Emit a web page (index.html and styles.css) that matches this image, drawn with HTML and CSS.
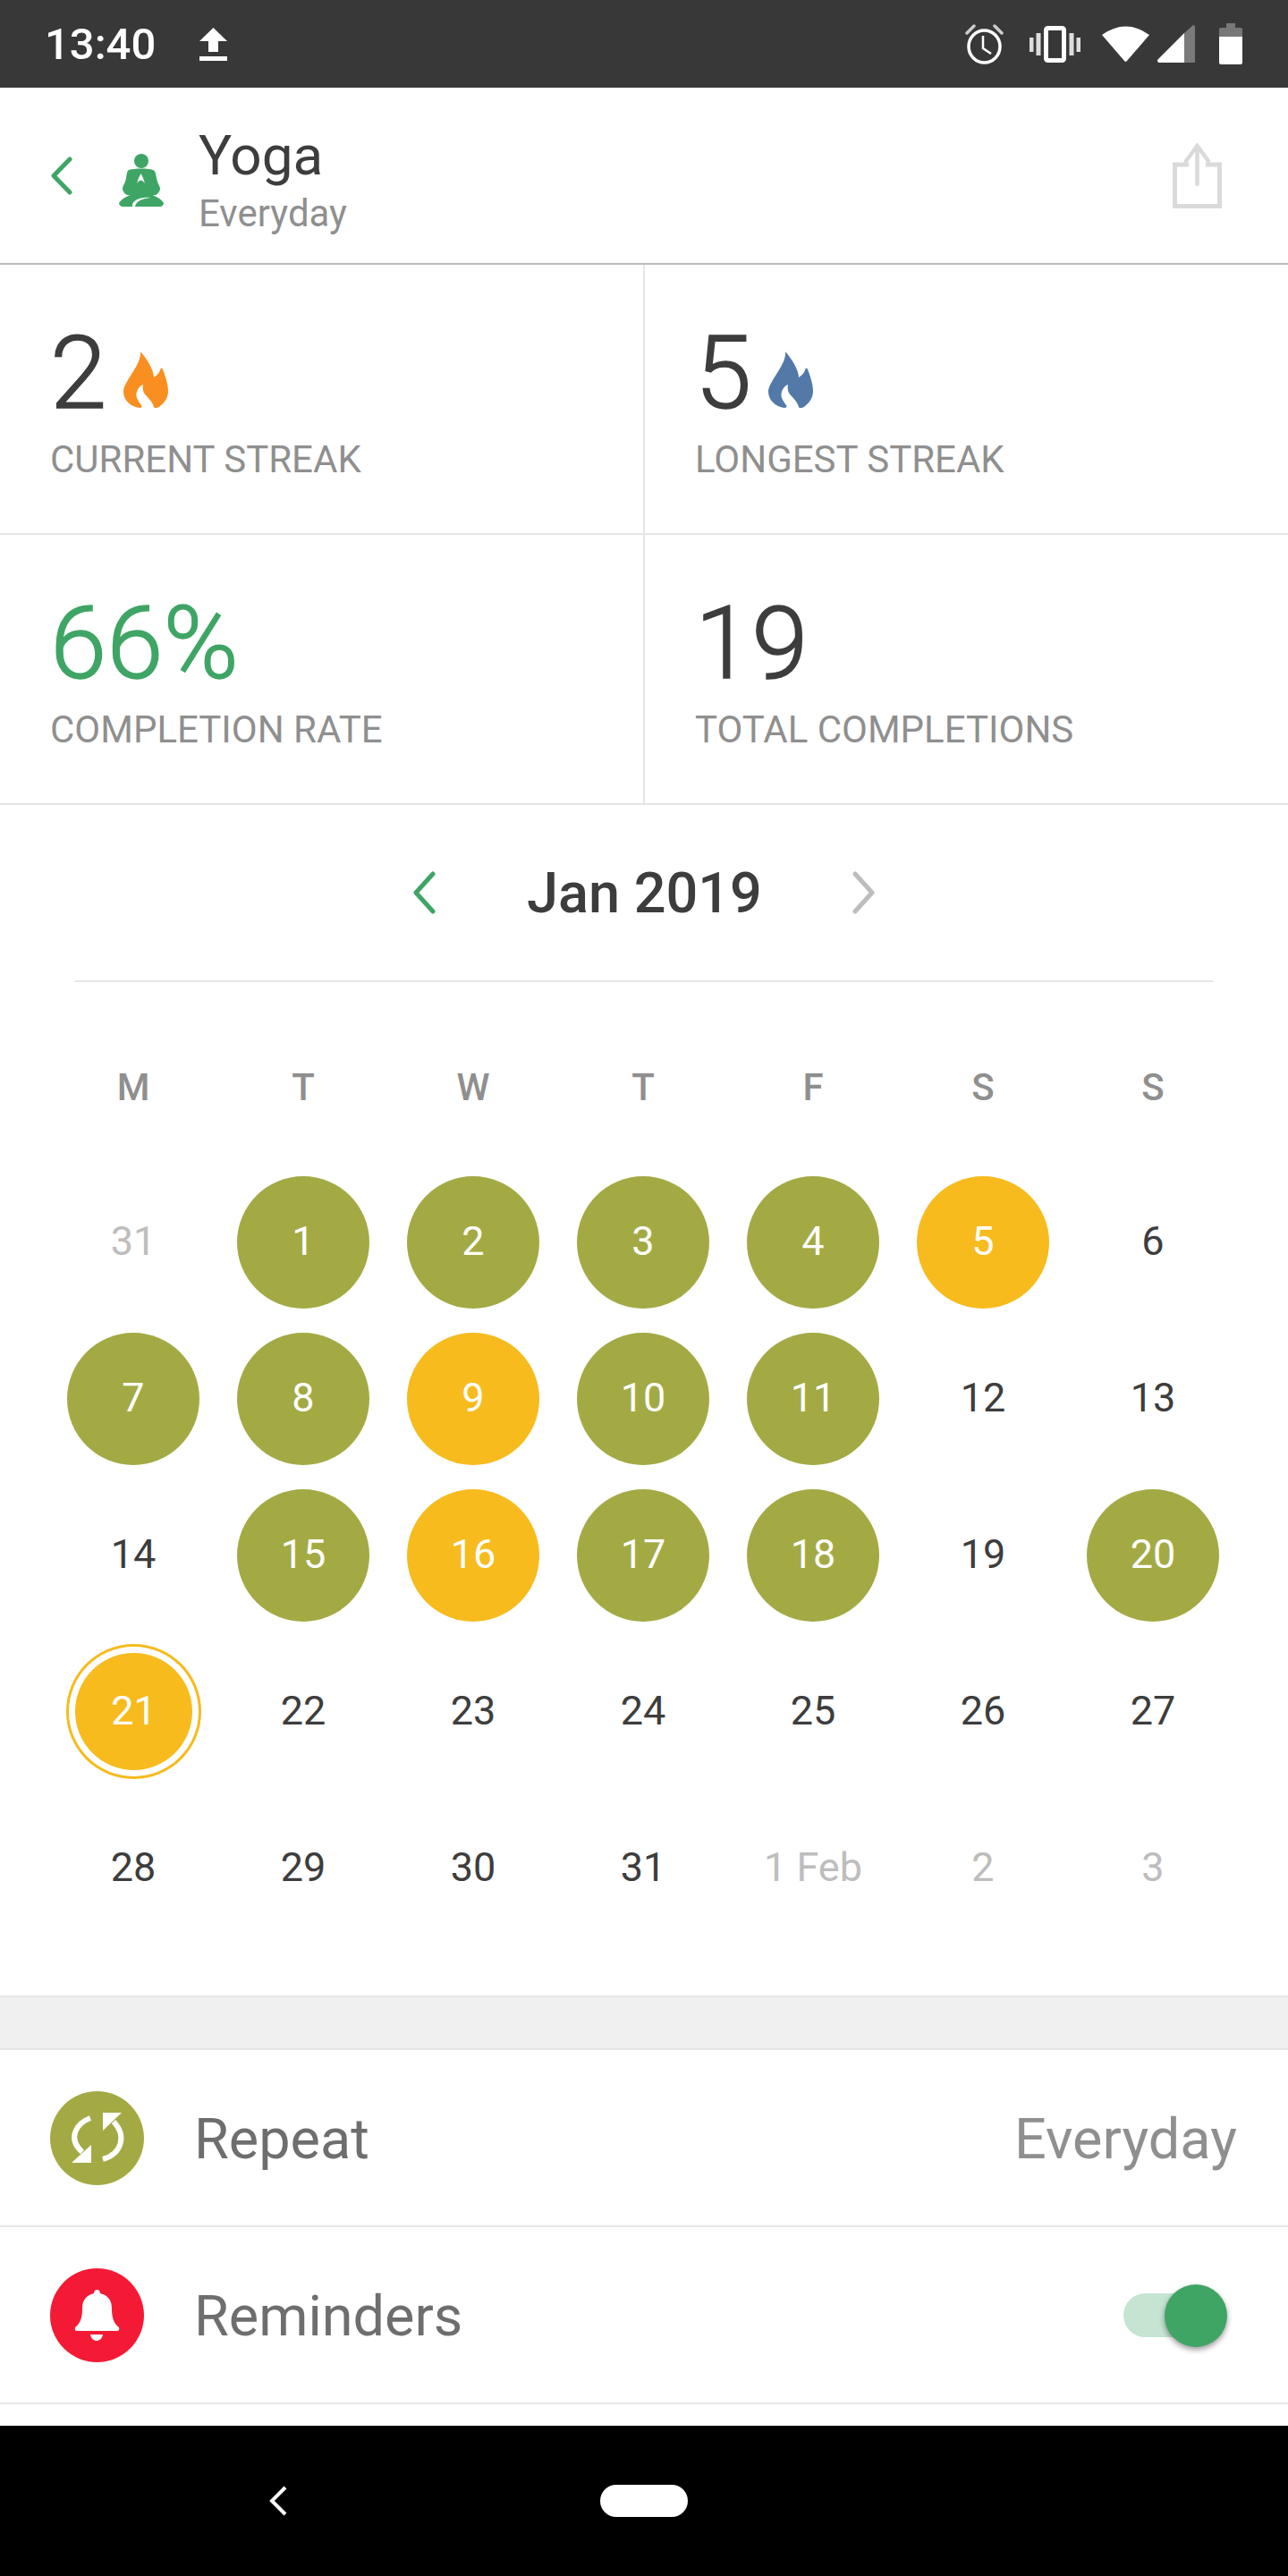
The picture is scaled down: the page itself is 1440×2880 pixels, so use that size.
FILE: index.html
```html
<!DOCTYPE html>
<html lang="en">
<head>
    <meta charset="UTF-8">
    <meta name="viewport" content="width=device-width, initial-scale=1.0">
    <title>Yoga</title>
    <link rel="stylesheet" href="styles.css">
</head>
<body>
<div class="screen">
    <!-- status bar -->
    <div class="status-bar">
        <span class="clock">13:40</span>
        <svg class="upload-icon" width="31" height="37" viewBox="0 0 31 37">
            <path d="M15.500 0 L31 15 H21 V27 H10 V15 H0 Z M0 32 H31 V37 H0 Z" fill="#fff"/>
        </svg>
        <div class="status-icons">
            <svg width="43" height="45" viewBox="0 0 43 45">
                <ellipse cx="21.500" cy="25" rx="17.500" ry="18" fill="none" stroke="#fff" stroke-width="3.500"/>
                <path d="M20 13 V27 L29 33" fill="none" stroke="#fff" stroke-width="2.500"/>
                <path d="M2 10 L10 2 M41 10 L33 2" stroke="#ccc" stroke-width="3.500" stroke-linecap="round"/>
            </svg>
            <svg class="icon-vibrate" width="57" height="41" viewBox="0 0 57 41">
                <rect x="18.500" y="2.500" width="20" height="36" rx="2" fill="none" stroke="#fff" stroke-width="5"/>
                <path d="M2 13 V29 M10 8 V33 M47 8 V33 M55 13 V29" stroke="#ddd" stroke-width="5"/>
            </svg>
            <svg class="icon-wifi" width="53" height="42" viewBox="0 0 53 42">
                <path d="M0 11 Q26.500 -8 53 11 L28 40 Q26.500 42 25 40 Z" fill="#fff"/>
            </svg>
            <svg class="icon-signal" width="42" height="42" viewBox="0 0 42 42">
                <path d="M30 9 L40 0 Q42 0 42 2 V42 H30 Z" fill="#7a7a7a"/>
                <path d="M30 9 V42 H2 Q0 42 0 39 Z" fill="#fff"/>
            </svg>
            <svg class="icon-battery" width="26" height="46" viewBox="0 0 26 46">
                <path d="M8 0 H18 V5 H24 Q26 5 26 7 V15 H0 V7 Q0 5 2 5 H8 Z" fill="#777"/>
                <path d="M0 15 H26 V44 Q26 46 24 46 H2 Q0 46 0 44 Z" fill="#fff"/>
            </svg>
        </div>
    </div>

    <!-- title row -->
    <div class="top-bar">
        <svg class="back-icon" width="25" height="43" viewBox="0 0 25 43">
            <path d="M22 3 L4 21.500 L22 40" fill="none" stroke="#3fa565" stroke-width="5" stroke-linecap="round" stroke-linejoin="round"/>
        </svg>
        <svg class="habit-icon" width="50" height="59" viewBox="0 0 50 59">
            <circle cx="25" cy="8" r="8" fill="#3fa565"/>
            <path d="M11 18 C17 16 33 16 38 18 C41 19 41 22 42 27 C43 33 46 36 46 39 C46 42 43 45 41 46 H9 C7 45 4 42 4 39 C4 36 7 33 8 27 C9 22 9 19 11 18 Z" fill="#3fa565"/>
            <path d="M0 55 C3 50 10 47 17 44 H33 C40 47 47 50 50 55 C50 57 48 59 46 59 H4 C2 59 0 57 0 55 Z" fill="#3fa565"/>
            <path d="M20 33 Q22 26 24.500 22 Q27 26 29 33 Q24.500 26 20 33 Z" fill="#fff"/>
            <path d="M15 59 C14 52 24 48 35 49 C28 50 19 52 18 59 Z" fill="#fff"/>
        </svg>
        <div class="title-block">
            <h1 class="habit-name">Yoga</h1>
            <p class="habit-freq">Everyday</p>
        </div>
        <svg class="share-icon" width="55" height="73" viewBox="0 0 55 73">
            <path d="M18 24 H2.500 V70.500 H52.500 V24 H37" fill="none" stroke="#dadada" stroke-width="5"/>
            <path d="M27.500 46 V3 M15 20 L27.500 3 L40 20" fill="none" stroke="#dadada" stroke-width="4.500" stroke-linecap="round"/>
        </svg>
    </div>

    <!-- streak numbers -->
    <div class="stats">
        <div class="stat">
            <div class="stat-value">2
                <svg class="flame" width="50" height="63" viewBox="0 0 50 63"><path d="M19 0 C20 8 14 18 8 27 C3 35 0 40 0 45 C0 54 8 62 18 63 C21 63 21 61 20 60 C16 55 13 50 15 45 C16 41 19 38 22 37 C21 42 22 46 26 50 C30 54 33 58 34 62 C35 64 38 63 40 62 C46 57 50 52 50 44 C50 36 46 25 44 20 C43 18 42 18 41 21 C40 24 37 27 34 29 C34 24 31 14 19 0 Z" fill="#f98f20"/></svg>
            </div>
            <div class="stat-label">CURRENT STREAK</div>
        </div>
        <div class="stat">
            <div class="stat-value">5
                <svg class="flame" width="50" height="63" viewBox="0 0 50 63"><path d="M19 0 C20 8 14 18 8 27 C3 35 0 40 0 45 C0 54 8 62 18 63 C21 63 21 61 20 60 C16 55 13 50 15 45 C16 41 19 38 22 37 C21 42 22 46 26 50 C30 54 33 58 34 62 C35 64 38 63 40 62 C46 57 50 52 50 44 C50 36 46 25 44 20 C43 18 42 18 41 21 C40 24 37 27 34 29 C34 24 31 14 19 0 Z" fill="#5379a8"/></svg>
            </div>
            <div class="stat-label">LONGEST STREAK</div>
        </div>
        <div class="stat">
            <div class="stat-value green">66%</div>
            <div class="stat-label">COMPLETION RATE</div>
        </div>
        <div class="stat">
            <div class="stat-value">19</div>
            <div class="stat-label">TOTAL COMPLETIONS</div>
        </div>
    </div>

    <!-- month calendar -->
    <div class="calendar">
        <div class="month-nav">
            <svg width="28" height="48" viewBox="0 0 28 48"><path d="M24 3 L5 24 L24 45" fill="none" stroke="#3fa565" stroke-width="5" stroke-linecap="round" stroke-linejoin="round"/></svg>
            <span class="month-name">Jan 2019</span>
            <svg width="28" height="48" viewBox="0 0 28 48"><path d="M4 3 L23 24 L4 45" fill="none" stroke="#bdbdbd" stroke-width="5" stroke-linecap="round" stroke-linejoin="round"/></svg>
        </div>
        <div class="month-rule"></div>
        <div class="weekdays">
            <span>M</span><span>T</span><span>W</span><span>T</span><span>F</span><span>S</span><span>S</span>
        </div>
        <div class="days">
            <div class="day"><span class="num muted">31</span></div>
            <div class="day"><span class="num done">1</span></div>
            <div class="day"><span class="num done">2</span></div>
            <div class="day"><span class="num done">3</span></div>
            <div class="day"><span class="num done">4</span></div>
            <div class="day"><span class="num best">5</span></div>
            <div class="day"><span class="num">6</span></div>

            <div class="day"><span class="num done">7</span></div>
            <div class="day"><span class="num done">8</span></div>
            <div class="day"><span class="num best">9</span></div>
            <div class="day"><span class="num done">10</span></div>
            <div class="day"><span class="num done">11</span></div>
            <div class="day"><span class="num">12</span></div>
            <div class="day"><span class="num">13</span></div>

            <div class="day"><span class="num">14</span></div>
            <div class="day"><span class="num done">15</span></div>
            <div class="day"><span class="num best">16</span></div>
            <div class="day"><span class="num done">17</span></div>
            <div class="day"><span class="num done">18</span></div>
            <div class="day"><span class="num">19</span></div>
            <div class="day"><span class="num done">20</span></div>

            <div class="day"><span class="num best today">21</span></div>
            <div class="day"><span class="num">22</span></div>
            <div class="day"><span class="num">23</span></div>
            <div class="day"><span class="num">24</span></div>
            <div class="day"><span class="num">25</span></div>
            <div class="day"><span class="num">26</span></div>
            <div class="day"><span class="num">27</span></div>

            <div class="day"><span class="num">28</span></div>
            <div class="day"><span class="num">29</span></div>
            <div class="day"><span class="num">30</span></div>
            <div class="day"><span class="num">31</span></div>
            <div class="day"><span class="num muted">1 Feb</span></div>
            <div class="day"><span class="num muted">2</span></div>
            <div class="day"><span class="num muted">3</span></div>
        </div>
    </div>

    <div class="band"></div>

    <!-- settings rows -->
    <div class="setting">
        <svg class="setting-icon" width="105" height="105" viewBox="0 0 105 105">
            <circle cx="52.500" cy="52.500" r="52.500" fill="#a3aa44"/>
            <path d="M45 30 C29 36 19 53 36 68" fill="none" stroke="#fff" stroke-width="6"/>
            <path d="M46 60 V80 H24 Z" fill="#fff"/>
            <path d="M59 24 H80 L59 44 Z" fill="#fff"/>
            <path d="M71 34 C86 50 80 70 59 76" fill="none" stroke="#fff" stroke-width="6"/>
        </svg>
        <span class="setting-label">Repeat</span>
        <span class="setting-value">Everyday</span>
    </div>
    <div class="setting">
        <svg class="setting-icon" width="105" height="105" viewBox="0 0 105 105">
            <circle cx="52.500" cy="52.500" r="52.500" fill="#f41a35"/>
            <path d="M52.500 24 C55 24 56 26 56 28 C65 30 69 36 69 45 C69 57 72 62 77 66 Q78 70 75 70 H30 Q27 70 28 66 C33 62 36 57 36 45 C36 36 40 30 49 28 C49 26 50 24 52.500 24 Z" fill="#fff"/>
            <path d="M45 74 H59 C58 79 55 81 52 81 C49 81 46 79 45 74 Z" fill="#fff"/>
        </svg>
        <span class="setting-label">Reminders</span>
        <div class="switch"><div class="switch-knob"></div></div>
    </div>
    <div class="page-rest"></div>

    <!-- navigation bar -->
    <div class="nav-bar">
        <svg class="nav-back" width="20" height="34" viewBox="0 0 20 34">
            <path d="M18 2 L3 17 L18 32" fill="none" stroke="#fff" stroke-width="4"/>
        </svg>
        <div class="nav-home"></div>
    </div>
</div>
</body>
</html>
```

FILE: styles.css
```css
* {
    box-sizing: border-box;
}
body {
    margin: 0;
    font-family: Roboto, "Noto Sans", sans-serif;
    background: white;
    color: #3d3d3d;
}
.screen {
    width: 1440px;
    height: 2880px;
    display: flex;
    flex-direction: column;
    overflow: hidden;
}

/* status bar */
.status-bar {
    height: 98px;
    flex: none;
    background: #383838;
    display: flex;
    align-items: center;
    padding: 0 51px 0 50px;
}
.clock {
    color: white;
    font-size: 49px;
    font-weight: 500;
    line-height: 98px;
    padding-top: 2px;
}
.upload-icon {
    margin: 0 0 0 49px;
}
.status-icons {
    margin-left: auto;
    display: flex;
    align-items: center;
}
.icon-vibrate {
    margin-left: 29px;
}
.icon-wifi {
    margin-left: 24px;
}
.icon-signal {
    margin-left: 9px;
}
.icon-battery {
    margin-left: 27px;
}

/* title row */
.top-bar {
    height: 198px;
    flex: none;
    border-bottom: 2px solid #bbbbbb;
    display: flex;
    align-items: center;
    padding: 0 74px 0 56px;
}
.habit-icon {
    margin-left: 52px;
    margin-top: 10px;
}
.title-block {
    margin-left: 39px;
    padding-top: 8px;
}
.habit-name {
    margin: 0;
    font-size: 62px;
    font-weight: 400;
    line-height: 74px;
}
.habit-freq {
    margin: 3px 0 0;
    font-size: 42px;
    line-height: 50px;
    color: #8f8f8f;
}
.share-icon {
    margin-left: auto;
}

/* streak numbers */
.stats {
    display: grid;
    grid-template-columns: 719px 721px;
    flex: none;
}
.stat {
    height: 302px;
    padding: 64px 0 0 56px;
    border-bottom: 2px solid #e6e6e6;
}
.stat:nth-child(even) {
    border-left: 2px solid #e6e6e6;
}
.stat-value {
    font-size: 114px;
    font-weight: 300;
    -webkit-text-stroke: 1.5px currentColor;
    line-height: 114px;
    height: 114px;
    display: flex;
    align-items: baseline;
}
.stat-value.green {
    color: #3fa565;
}
.flame {
    margin: 0 0 2px 19px;
}
.stat-label {
    margin-top: 15px;
    font-size: 42px;
    font-weight: 400;
    line-height: 50px;
    color: #8f8f8f;
}

/* month calendar */
.calendar {
    flex: none;
    height: 1333px;
    border-bottom: 2px solid #e6e6e6;
}
.month-nav {
    height: 196px;
    display: flex;
    align-items: center;
    justify-content: center;
    gap: 101px;
}
.month-name {
    font-size: 63px;
    font-weight: 500;
    width: 262px;
    text-align: center;
    white-space: nowrap;
}
.month-rule {
    height: 2px;
    margin: 0 84px;
    background: #e6e6e6;
}
.weekdays {
    display: grid;
    grid-template-columns: repeat(7, 190px);
    margin: 67px 0 36px 54px;
    height: 100px;
    align-items: center;
    text-align: center;
    font-size: 42px;
    font-weight: 500;
    color: #8f8f8f;
}
.days {
    display: grid;
    grid-template-columns: repeat(7, 190px);
    grid-auto-rows: 175px;
    margin-left: 54px;
}
.day {
    display: flex;
    align-items: center;
    justify-content: center;
}
.num {
    width: 148px;
    height: 148px;
    border-radius: 50%;
    display: flex;
    align-items: center;
    justify-content: center;
    padding-bottom: 2px;
    font-size: 45px;
    white-space: nowrap;
}
.num.muted {
    color: #bdbdbd;
}
.num.done {
    background: #a3aa44;
    color: white;
}
.num.best {
    background: #f7bb1e;
    color: white;
}
.num.today {
    width: 131px;
    height: 131px;
    margin-left: 1px;
    box-shadow: 0 0 0 7px white, 0 0 0 10px #f7bb1e;
}

.band {
    height: 57px;
    flex: none;
    background: #f0f0f0;
}

/* settings rows */
.setting {
    height: 198px;
    flex: none;
    border-top: 2px solid #e6e6e6;
    display: flex;
    align-items: center;
    padding: 0 57px 0 56px;
}
.setting-label {
    margin-left: 56px;
    padding-top: 2px;
    font-size: 63px;
    color: #6e6e6e;
}
.setting-value {
    margin-left: auto;
    padding-top: 2px;
    font-size: 63px;
    color: #8f8f8f;
}
.switch {
    margin-left: auto;
    margin-right: 21px;
    position: relative;
    width: 106px;
    height: 49px;
    border-radius: 25px;
    background: #c5e4d2;
}
.switch-knob {
    position: absolute;
    right: -10px;
    top: -10px;
    width: 70px;
    height: 70px;
    border-radius: 50%;
    background: #3fa565;
    box-shadow: 0 3px 6px rgba(0,0,0,0.4);
}
.page-rest {
    flex: 1;
    border-top: 2px solid #e6e6e6;
}

/* navigation bar */
.nav-bar {
    height: 168px;
    flex: none;
    background: black;
    display: flex;
    align-items: center;
    padding: 0 0 0 301px;
}
.nav-home {
    width: 98px;
    height: 36px;
    margin-left: 350px;
    border-radius: 18px;
    background: white;
}
```
